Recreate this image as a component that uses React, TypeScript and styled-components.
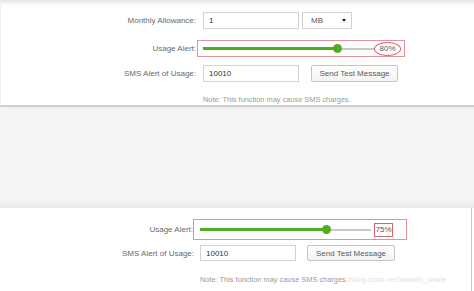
import React from "react";
import styled, { createGlobalStyle } from "styled-components";

const Global = createGlobalStyle`
  html, body { margin: 0; padding: 0; background: #ffffff; }
  body { font-family: "Liberation Sans", Arial, sans-serif; }
`;

const Page = styled.div`
  width: 474px;
  height: 291px;
  display: flex;
  flex-direction: column;
  overflow: hidden;
  background: #ffffff;
`;

const TopPanel = styled.section`
  height: 107px;
  box-sizing: border-box;
  padding-top: 12px;
  display: flex;
  flex-direction: column;
  background: linear-gradient(#e6e6e6 0px, #f3f3f3 3px, #ffffff 6px);
  border-left: 1px solid #f0f0f0;
  border-bottom: 2px solid #cfcfcf;
`;

const GrayArea = styled.div`
  height: 101px;
  background: linear-gradient(#efefef 0px, #f4f4f4 3px, #f4f4f4 92px, #ebebeb 101px);
`;

const BottomPanel = styled.section`
  flex: 1;
  width: 472px;
  box-sizing: border-box;
  padding-top: 11px;
  display: flex;
  flex-direction: column;
  background: #ffffff;
  border-right: 1px solid #c8c8c8;
`;

const Row = styled.div<{ $top?: number; $h: number; $labelW: number }>`
  display: grid;
  grid-template-columns: ${(p) => p.$labelW}px auto;
  column-gap: ${(p) => 202 - p.$labelW - (p.$labelW < 195 ? 2 : 0)}px;
  align-items: center;
  height: ${(p) => p.$h}px;
  margin-top: ${(p) => p.$top ?? 0}px;
`;

const Label = styled.label`
  font-size: 8px;
  color: #6a6a6a;
  text-align: right;
  white-space: nowrap;
`;

const Controls = styled.div<{ $gap: number }>`
  display: flex;
  align-items: center;
  gap: ${(p) => p.$gap}px;
  height: 100%;
`;

const TextBox = styled.div<{ $h: number }>`
  width: 96px;
  height: ${(p) => p.$h}px;
  box-sizing: border-box;
  border: 1px solid #d2d2d2;
  padding-left: 5px;
  display: flex;
  align-items: center;
  font-size: 8px;
  color: #333333;
  background: #ffffff;
`;

const SelectBox = styled.div`
  width: 50px;
  height: 17px;
  box-sizing: border-box;
  border: 1px solid #d2d2d2;
  padding: 0 4px 0 8px;
  display: flex;
  align-items: center;
  justify-content: space-between;
  font-size: 8px;
  color: #555555;
`;

const Caret = styled.span`
  width: 0;
  height: 0;
  border-left: 2px solid transparent;
  border-right: 2px solid transparent;
  border-top: 3px solid #222222;
  margin-right: 1px;
`;

const Button = styled.div<{ $w: number; $h: number }>`
  width: ${(p) => p.$w}px;
  height: ${(p) => p.$h}px;
  box-sizing: border-box;
  border: 1px solid #c4c4c4;
  border-radius: 2px;
  background: linear-gradient(#ffffff, #f3f3f3);
  display: flex;
  align-items: center;
  justify-content: center;
  font-size: 8px;
  color: #5a5a5a;
`;

const Highlight = styled.div<{ $w: number; $h: number; $pad: number }>`
  width: ${(p) => p.$w}px;
  height: ${(p) => p.$h}px;
  box-sizing: border-box;
  margin-left: -${(p) => p.$pad}px;
  padding-left: ${(p) => p.$pad - 1}px;
  border: 1px solid #e4939c;
  display: flex;
  align-items: center;
`;

const Track = styled.div`
  position: relative;
  width: 171px;
  height: 2px;
  background: #c9c9c9;
`;

const Fill = styled.div`
  position: absolute;
  left: 0;
  top: -0.5px;
  height: 3px;
  background: #4fad1e;
`;

const Thumb = styled.div`
  position: absolute;
  top: -3.5px;
  width: 9px;
  height: 9px;
  border-radius: 50%;
  background: #4fad1e;
`;

const Percent = styled.span<{ $shape: "ellipse" | "box" }>`
  box-sizing: border-box;
  height: 14px;
  display: flex;
  align-items: center;
  justify-content: center;
  font-size: 8px;
  color: #555555;
  border: 1px solid #d9636f;
  ${(p) =>
    p.$shape === "ellipse"
      ? "width: 27px; border-radius: 50%; margin-left: 0px;"
      : "width: 19px; margin-left: 3px; border-radius: 0;"}
`;

const NoteLine = styled.div<{ $top: number; $left: number }>`
  margin-top: ${(p) => p.$top}px;
  padding-left: ${(p) => p.$left}px;
  height: 10px;
  display: flex;
  align-items: center;
  font-size: 7.4px;
  color: #9a9a9a;
  white-space: nowrap;
`;

const Watermark = styled.span`
  color: #e2e2e2;
  font-size: 7.6px;
`;

function Slider({ value }: { value: number }) {
  const center = 4.5 + (value * (171 - 9)) / 100;
  return (
    <Track>
      <Fill style={{ width: center }} />
      <Thumb style={{ left: center - 4.5 }} />
    </Track>
  );
}

export default function App() {
  return (
    <Page>
      <Global />
      <TopPanel>
        <Row $h={17} $labelW={195}>
          <Label>Monthly Allowance:</Label>
          <Controls $gap={3}>
            <TextBox $h={17}>1</TextBox>
            <SelectBox>
              MB
              <Caret />
            </SelectBox>
          </Controls>
        </Row>
        <Row $h={17} $top={11} $labelW={195}>
          <Label>Usage Alert:</Label>
          <Controls $gap={0}>
            <Highlight $w={208} $h={17} $pad={6}>
              <Slider value={80} />
              <Percent $shape="ellipse">80%</Percent>
            </Highlight>
          </Controls>
        </Row>
        <Row $h={17} $top={8} $labelW={195}>
          <Label>SMS Alert of Usage:</Label>
          <Controls $gap={12}>
            <TextBox $h={17}>10010</TextBox>
            <Button $w={87} $h={17}>Send Test Message</Button>
          </Controls>
        </Row>
        <NoteLine $top={12} $left={202}>
          Note: This function may cause SMS charges.
        </NoteLine>
      </TopPanel>
      <GrayArea />
      <BottomPanel>
        <Row $h={21} $labelW={193}>
          <Label>Usage Alert:</Label>
          <Controls $gap={0}>
            <Highlight $w={214} $h={21} $pad={7}>
              <Slider value={75} />
              <Percent $shape="box">75%</Percent>
            </Highlight>
          </Controls>
        </Row>
        <Row $h={16} $top={5} $labelW={194}>
          <Label>SMS Alert of Usage:</Label>
          <Controls $gap={11}>
            <TextBox $h={16}>10010</TextBox>
            <Button $w={88} $h={16}>Send Test Message</Button>
          </Controls>
        </Row>
        <NoteLine $top={13} $left={200}>
          Note: This function may cause SMS charges.
          <Watermark>//blog.csdn.net/xiaoxin_share</Watermark>
        </NoteLine>
      </BottomPanel>
    </Page>
  );
}
